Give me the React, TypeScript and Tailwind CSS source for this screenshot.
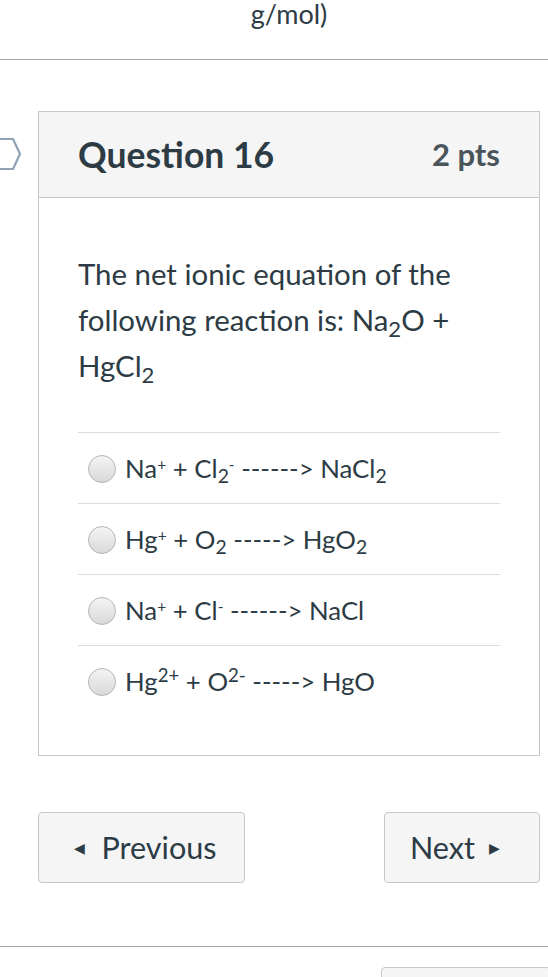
import { ReactNode } from 'react';

const sup = 'text-[0.6em] leading-none';
const sup2 = 'text-[0.72em] leading-none';
const sub = 'text-[0.75em] leading-none';

const answers: ReactNode[] = [
  <>
    Na<sup className={sup}>+</sup> + Cl<sub className={sub}>2</sub>
    <sup className={sup}>-</sup> ------&gt; NaCl<sub className={sub}>2</sub>
  </>,
  <>
    Hg<sup className={sup}>+</sup> + O<sub className={sub}>2</sub> -----&gt; HgO<sub className={sub}>2</sub>
  </>,
  <>
    Na<sup className={sup}>+</sup> + Cl<sup className={sup}>-</sup> ------&gt; NaCl
  </>,
  <>
    Hg<sup className={sup2}>2+</sup> + O<sup className={sup2}>2-</sup> -----&gt; HgO
  </>,
];

function Radio() {
  return (
    <span className="inline-block w-[28px] h-[28px] shrink-0 rounded-full border border-[#b5b5b5] bg-gradient-to-b from-[#f4f4f4] to-[#d9d9d9]" />
  );
}

export default function App() {
  return (
    <div className="w-[548px] min-h-[977px] bg-white text-[#2d3b45] font-['Lato','Liberation_Sans',sans-serif] overflow-hidden">
      <div className="h-[60px] border-b border-[#a5a5a5] text-center">
        <div className="text-[27px] leading-none pl-[30px]">g/mol)</div>
      </div>

      <div className="relative mt-[51px] ml-[38px] w-[502px] border border-[#c4c8cc]">
        <svg className="absolute -left-[39px] top-[26px]" width="22" height="32" viewBox="0 0 22 32">
          <path d="M-4 1 L13 1 L20 16 L13 31 L-4 31 Z" fill="white" stroke="#8fa3b5" strokeWidth="2.2" strokeLinejoin="round" />
        </svg>
        <div className="h-[86px] bg-[#f5f5f5] border-b border-[#c4c8cc] flex items-center justify-between px-[39px]">
          <span className="text-[35.5px] font-bold">Question 16</span>
          <span className="text-[31px] font-bold text-[#4a545b]">2 pts</span>
        </div>

        <div className="px-[39px] pt-[53px] pb-[39px]">
          <p className="text-[29.4px] leading-[46px]">
            The net ionic equation of the following reaction is: Na<sub className={sub}>2</sub>O + HgCl
            <sub className={sub}>2</sub>
          </p>

          <div className="mt-[43px]">
            {answers.map((a, i) => (
              <div key={i} className="h-[71px] border-t border-[#dcdcdc] flex items-center gap-[9px] pl-[10px] pt-[2px]">
                <Radio />
                <span className="text-[25.8px] leading-none">{a}</span>
              </div>
            ))}
          </div>
        </div>
      </div>

      <div className="mt-[56px] flex justify-between pl-[38px] pr-[8px]">
        <button className="w-[207px] h-[71px] rounded-[4px] border border-[#c4c8cc] bg-[#f5f5f5] flex items-center justify-center gap-[16px] text-[30.6px] pl-[8px]">
          <span className="text-[14px] text-[#2d3b45]">◀</span>
          Previous
        </button>
        <button className="w-[156px] h-[71px] rounded-[4px] border border-[#c4c8cc] bg-[#f5f5f5] flex items-center justify-center gap-[14px] text-[30.6px] pr-[14px]">
          Next
          <span className="text-[14px] text-[#2d3b45]">▶</span>
        </button>
      </div>

      <div className="mt-[63px] border-t border-[#a5a5a5]" />
      <div className="mt-[20px] ml-[381px] w-[170px] h-[40px] rounded-t-[4px] border border-[#c4c8cc] bg-[#f5f5f5]" />
    </div>
  );
}
